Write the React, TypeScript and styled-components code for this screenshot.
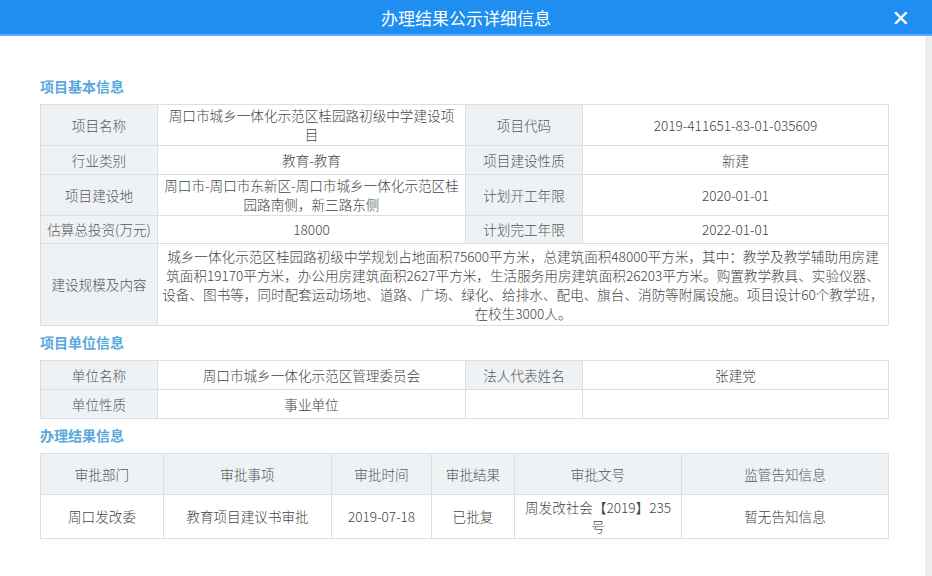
import styled, { createGlobalStyle } from "styled-components";

const Global = createGlobalStyle`
  body { margin: 0; background: #fff; font-family: "Noto Sans CJK SC", sans-serif; }
`;

const Page = styled.div`
  width: 932px;
  height: 576px;
  position: relative;
  overflow: hidden;
  background: #fff;
`;

const Header = styled.div`
  height: 34px;
  background: #1e8ff0;
  border-bottom: 2px solid #5aaef5;
  display: flex;
  align-items: center;
  justify-content: center;
  color: #fff;
  font-size: 17px;
  position: relative;
`;

const Close = styled.div`
  position: absolute;
  right: 22px;
  top: 6px;
  color: #fff;
  font-size: 22px;
  font-weight: bold;
  font-family: "DejaVu Sans", sans-serif;
`;

const Scroll = styled.div`
  position: absolute;
  right: 0;
  top: 36px;
  width: 7px;
  height: 540px;
  background: #eceef0;
`;

const Body = styled.div`
  padding: 40px 44px 0 40px;
`;

const Title = styled.div<{ $top?: number }>`
  color: #5aa8dc;
  font-weight: bold;
  font-size: 14px;
  height: 20px;
  line-height: 20px;
  margin: ${(p) => p.$top ?? 6}px 0 8px 0;
`;

const Table = styled.table`
  width: 848px;
  border-collapse: collapse;
  table-layout: fixed;
  font-size: 13.6px;
  font-weight: 300;
  color: #444;
  td {
    border: 1px solid #d8dfe5;
    text-align: center;
    padding: 1px 4px;
    line-height: 19px;
  }
`;

const Col = styled.col<{ $w: number }>`
  width: ${(p) => p.$w}px;
`;

const Row = styled.tr<{ $h: number }>`
  height: ${(p) => p.$h}px;
`;

const Label = styled.td`
  background: #eef2f5;
  color: #555;
`;

const Cell = styled.td``;

const basic: [string, string, string, string, number][] = [
  ["项目名称", "周口市城乡一体化示范区桂园路初级中学建设项目", "项目代码", "2019-411651-83-01-035609", 40],
  ["行业类别", "教育-教育", "项目建设性质", "新建", 29],
  ["项目建设地", "周口市-周口市东新区-周口市城乡一体化示范区桂园路南侧，新三路东侧", "计划开工年限", "2020-01-01", 41],
  ["估算总投资(万元)", "18000", "计划完工年限", "2022-01-01", 28],
];

const FourCols = () => (
  <colgroup>
    <Col $w={117} />
    <Col $w={308} />
    <Col $w={117} />
    <Col $w={306} />
  </colgroup>
);

const resultWidths = [123, 168, 100, 83, 167, 207];
const resultHead = ["审批部门", "审批事项", "审批时间", "审批结果", "审批文号", "监管告知信息"];
const resultRow = ["周口发改委", "教育项目建议书审批", "2019-07-18", "已批复", "周发改社会【2019】235号", "暂无告知信息"];

export default function App() {
  return (
    <Page>
      <Global />
      <Header>
        办理结果公示详细信息
        <Close>✕</Close>
      </Header>
      <Scroll />
      <Body>
        <Title $top={0}>项目基本信息</Title>
        <Table>
          <FourCols />
          <tbody>
            {basic.map(([a, b, c, d, h]) => (
              <Row key={a} $h={h}>
                <Label>{a}</Label>
                <Cell>{b}</Cell>
                <Label>{c}</Label>
                <Cell>{d}</Cell>
              </Row>
            ))}
            <Row $h={82}>
              <Label>建设规模及内容</Label>
              <Cell colSpan={3}>
                城乡一体化示范区桂园路初级中学规划占地面积75600平方米，总建筑面积48000平方米，其中：教学及教学辅助用房建筑面积19170平方米，办公用房建筑面积2627平方米，生活服务用房建筑面积26203平方米。购置教学教具、实验仪器、设备、图书等，同时配套运动场地、道路、广场、绿化、给排水、配电、旗台、消防等附属设施。项目设计60个教学班，在校生3000人。
              </Cell>
            </Row>
          </tbody>
        </Table>
        <Title>项目单位信息</Title>
        <Table>
          <FourCols />
          <tbody>
            <Row $h={29}>
              <Label>单位名称</Label>
              <Cell>周口市城乡一体化示范区管理委员会</Cell>
              <Label>法人代表姓名</Label>
              <Cell>张建党</Cell>
            </Row>
            <Row $h={29}>
              <Label>单位性质</Label>
              <Cell>事业单位</Cell>
              <Cell />
              <Cell />
            </Row>
          </tbody>
        </Table>
        <Title>办理结果信息</Title>
        <Table>
          <colgroup>
            {resultWidths.map((w, i) => (
              <Col key={i} $w={w} />
            ))}
          </colgroup>
          <tbody>
            <Row $h={41}>
              {resultHead.map((t) => (
                <Label key={t}>{t}</Label>
              ))}
            </Row>
            <Row $h={44}>
              {resultRow.map((t) => (
                <Cell key={t}>{t}</Cell>
              ))}
            </Row>
          </tbody>
        </Table>
      </Body>
    </Page>
  );
}
